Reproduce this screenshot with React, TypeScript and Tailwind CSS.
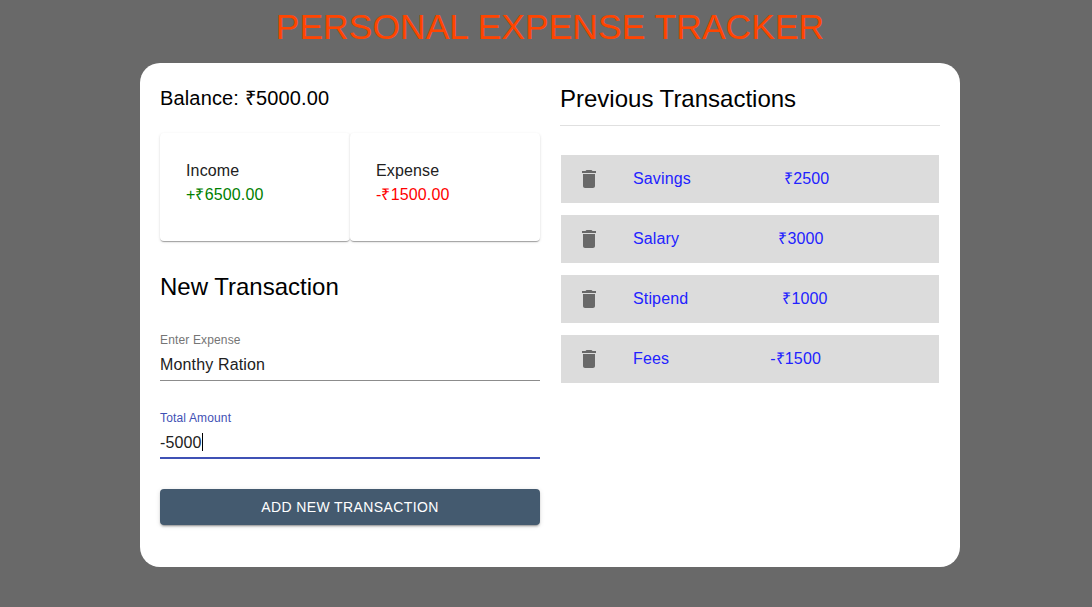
import React from 'react';

const transactions = [
  { id: 1, name: 'Savings', amount: '₹2500', offset: 'ml-[93px]' },
  { id: 2, name: 'Salary', amount: '₹3000', offset: 'ml-[99px]' },
  { id: 3, name: 'Stipend', amount: '₹1000', offset: 'ml-[94px]' },
  { id: 4, name: 'Fees', amount: '-₹1500', offset: 'ml-[101px]' },
];

const TrashIcon = () => (
  <svg viewBox="0 0 24 24" className="h-6 w-6 fill-[#696969]">
    <path d="M6 19c0 1.1.9 2 2 2h8c1.1 0 2-.9 2-2V7H6v12zM19 4h-3.5l-1-1h-5l-1 1H5v2h14V4z" />
  </svg>
);

const SummaryCard = ({ label, value, color }: { label: string; value: string; color: string }) => (
  <div className="h-[108px] w-[190px] rounded bg-white px-[26px] pt-[26px] text-base leading-6 tracking-[0.15px] text-[#212121] shadow-[0_2px_1px_-1px_rgba(0,0,0,0.2),0_1px_1px_0_rgba(0,0,0,0.14),0_1px_3px_0_rgba(0,0,0,0.12)]">
    <div>{label}</div>
    <div className={color}>{value}</div>
  </div>
);

const App = () => {
  return (
    <div className="h-[607px] overflow-hidden bg-[#696969] font-['Liberation_Sans',Arial,sans-serif]">
      <h1 className="h-[63px] pl-2 pt-[5px] text-center text-[35.5px] leading-[44px] text-[#ff4500]">PERSONAL EXPENSE TRACKER</h1>

      <div className="ml-[140px] flex h-[504px] w-[820px] gap-5 rounded-[20px] bg-white px-5 pb-5 pt-[21px]">
        {/* Left column */}
        <div className="w-[380px]">
          <h2 className="text-[20px] leading-7 tracking-[0.15px] text-black">Balance: ₹5000.00</h2>

          <div className="mt-[21px] flex">
            <SummaryCard label="Income" value="+₹6500.00" color="text-[#008000]" />
            <SummaryCard label="Expense" value="-₹1500.00" color="text-[#ff0000]" />
          </div>

          <h2 className="mt-[30px] text-[24px] leading-8 text-black">New Transaction</h2>

          <div className="mt-[30px]">
            <label className="block text-xs leading-[14px] tracking-[0.15px] text-[#757575]">Enter Expense</label>
            <div className="mt-[6px] h-[28px] border-b border-[#8c8c8c] text-base leading-[24px] tracking-[0.15px] text-[#212121]">Monthy Ration</div>
          </div>

          <div className="mt-[30px]">
            <label className="block text-xs leading-[14px] tracking-[0.15px] text-[#3f51b5]">Total Amount</label>
            <div className="mt-[5px] h-[29px] border-b-2 border-[#3f51b5] text-base leading-[24px] tracking-[0.15px] text-[#212121]">
              -5000<span className="inline-block h-[18px] w-px translate-y-[3px] bg-black" />
            </div>
          </div>

          <button className="mt-[30px] h-9 w-full rounded bg-[#445a6f] text-sm font-medium leading-9 tracking-[0.4px] text-white shadow-[0_3px_1px_-2px_rgba(0,0,0,0.2),0_2px_2px_0_rgba(0,0,0,0.14),0_1px_5px_0_rgba(0,0,0,0.12)]">
            ADD NEW TRANSACTION
          </button>
        </div>

        {/* Right column */}
        <div className="w-[380px]">
          <h2 className="border-b border-[#e0e0e0] pb-[12px] text-[24px] leading-[29px] text-black">Previous Transactions</h2>

          <ul className="mt-[29px] flex flex-col gap-3">
            {transactions.map((t) => (
              <li key={t.id} className="mx-px flex h-[48px] items-center bg-[#dcdcdc] pl-4 text-base tracking-[0.15px] text-[#2222ff]">
                <TrashIcon />
                <span className="ml-8">{t.name}</span>
                <span className={t.offset}>{t.amount}</span>
              </li>
            ))}
          </ul>
        </div>
      </div>
    </div>
  );
};

export default App;
